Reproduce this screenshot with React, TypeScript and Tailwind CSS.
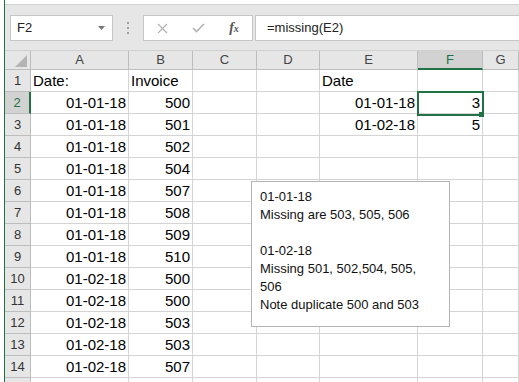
import React from "react";

const colW = ["w-[98px]", "w-[64px]", "w-[64px]", "w-[63px]", "w-[98px]", "w-[65px]", "flex-1"];
const letters = ["A", "B", "C", "D", "E", "F", "G"];

const rows: string[][] = [
  ["Date:", "Invoice", "", "", "Date", "", ""],
  ["01-01-18", "500", "", "", "01-01-18", "3", ""],
  ["01-01-18", "501", "", "", "01-02-18", "5", ""],
  ["01-01-18", "502", "", "", "", "", ""],
  ["01-01-18", "504", "", "", "", "", ""],
  ["01-01-18", "507", "", "", "", "", ""],
  ["01-01-18", "508", "", "", "", "", ""],
  ["01-01-18", "509", "", "", "", "", ""],
  ["01-01-18", "510", "", "", "", "", ""],
  ["01-02-18", "500", "", "", "", "", ""],
  ["01-02-18", "500", "", "", "", "", ""],
  ["01-02-18", "503", "", "", "", "", ""],
  ["01-02-18", "503", "", "", "", "", ""],
  ["01-02-18", "507", "", "", "", "", ""],
  ["", "", "", "", "", "", ""],
];

export default function App() {
  return (
    <div className="relative w-[519px] h-[382px] overflow-hidden flex bg-white font-['Liberation_Sans',Arial,sans-serif] text-black">
      {/* left strip (window behind) */}
      <div className="w-[4px] shrink-0 bg-white" />
      <div className="w-px shrink-0 bg-[#217346]" />

      <div className="flex-1 min-w-0 flex flex-col">
        <div className="h-[4px] shrink-0 bg-white" />
        {/* Formula bar area */}
        <div className="h-[47px] shrink-0 bg-[#e6e6e6] border-t border-b border-[#d0d0d0] pt-[10px] flex items-start">
          <div className="ml-[5px] w-[103px] h-[26px] shrink-0 bg-white border border-[#c6c6c6] flex items-center pl-[6px] pr-[7px] justify-between">
            <span className="text-[13px] text-[#222]">F2</span>
            <svg width="7" height="4" viewBox="0 0 7 4">
              <path d="M0 0 L7 0 L3.5 4 Z" fill="#767676" />
            </svg>
          </div>
          <div className="w-[29px] shrink-0 h-[26px] flex flex-col items-center justify-center gap-[3px]">
            <div className="w-[2px] h-[2px] bg-[#a0a0a0]" />
            <div className="w-[2px] h-[2px] bg-[#a0a0a0]" />
            <div className="w-[2px] h-[2px] bg-[#a0a0a0]" />
          </div>
          <div className="ml-[1px] w-[110px] h-[26px] shrink-0 bg-white border border-[#c6c6c6] flex items-center">
            <div className="w-[36px] flex justify-center pl-[1px]">
              <svg width="11" height="11" viewBox="0 0 11 11">
                <path d="M1 1 L10 10 M10 1 L1 10" stroke="#b4b4b4" strokeWidth="1.3" fill="none" />
              </svg>
            </div>
            <div className="w-[36px] flex justify-center">
              <svg width="13" height="10" viewBox="0 0 13 10">
                <path d="M1 5 L4.5 8.5 L12 1" stroke="#b4b4b4" strokeWidth="1.6" fill="none" />
              </svg>
            </div>
            <div className="w-[36px] flex justify-center">
              <span className="font-['Liberation_Serif',serif] italic font-bold text-[14px] text-[#555] leading-none">
                f<span className="text-[10px]">x</span>
              </span>
            </div>
          </div>
          <div className="ml-[2px] w-[300px] h-[26px] shrink-0 bg-white border border-[#c6c6c6] flex items-center pl-[11px]">
            <span className="text-[13px] text-[#222]">=missing(E2)</span>
          </div>
        </div>

        {/* Column headers */}
        <div className="h-[19px] shrink-0 flex bg-[#e6e6e6]">
          <div className="w-[26px] shrink-0 h-full border-r border-b border-[#bdbdbd] relative">
            <svg className="absolute right-[3px] bottom-[2px]" width="12" height="12" viewBox="0 0 12 12">
              <path d="M12 0 L12 12 L0 12 Z" fill="#b4b4b4" />
            </svg>
          </div>
          {letters.map((l, i) =>
            l === "F" ? (
              <div
                key={l}
                className={`${colW[i]} shrink-0 h-full bg-[#d2d2d2] border-r border-[#bdbdbd] border-b-2 border-b-[#217346] flex items-center justify-center text-[13px] text-[#217346]`}
              >
                {l}
              </div>
            ) : (
              <div
                key={l}
                className={`${colW[i]} ${i === 6 ? "" : "shrink-0"} h-full border-r border-b border-[#bdbdbd] flex items-center justify-center text-[13px] text-[#444]`}
              >
                {l}
              </div>
            )
          )}
        </div>

        {/* Rows */}
        {rows.map((r, ri) => {
          const sel = ri === 1;
          return (
            <div key={ri} className="h-[22px] shrink-0 flex">
              <div
                className={`w-[26px] shrink-0 h-full border-b border-[#bdbdbd] flex items-end justify-center pb-[3px] text-[13px] leading-[15px] ${
                  sel
                    ? "bg-[#d2d2d2] text-[#217346] border-r-2 border-r-[#217346]"
                    : "bg-[#e6e6e6] text-[#333] border-r border-r-[#bdbdbd]"
                }`}
              >
                {ri < 14 ? ri + 1 : ""}
              </div>
              {r.map((c, ci) => {
                const num = /^\d/.test(c);
                return (
                  <div
                    key={ci}
                    className={`${colW[ci]} ${ci === 6 ? "" : "shrink-0"} h-full border-r border-b border-[#d4d4d4] flex items-end pl-[2px] pr-[2px] pb-[2px] text-[15px] leading-[17px] whitespace-nowrap ${
                      num ? "justify-end" : "justify-start"
                    }`}
                  >
                    {c}
                  </div>
                );
              })}
            </div>
          );
        })}
      </div>

      {/* Selection box around F2 */}
      <div className="absolute left-[417px] top-[91px] w-[67px] h-[25px] border-2 border-[#217346]" />
      <div className="absolute left-[479px] top-[112px] w-[5px] h-[5px] bg-[#217346]" />

      {/* Text box */}
      <div className="absolute left-[251px] top-[181px] w-[199px] h-[146px] bg-white border border-[#b4b4b4] pl-[8px] pt-[6px] text-[13px] text-[#111]">
        <div className="h-[18px] leading-[18px]">01-01-18</div>
        <div className="h-[18px] leading-[18px]">Missing are 503, 505, 506</div>
        <div className="h-[18px] leading-[18px]" />
        <div className="h-[18px] leading-[18px]">01-02-18</div>
        <div className="h-[18px] leading-[18px]">Missing 501, 502,504, 505,</div>
        <div className="h-[18px] leading-[18px]">506</div>
        <div className="h-[18px] leading-[18px]">Note duplicate 500 and 503</div>
      </div>
    </div>
  );
}
